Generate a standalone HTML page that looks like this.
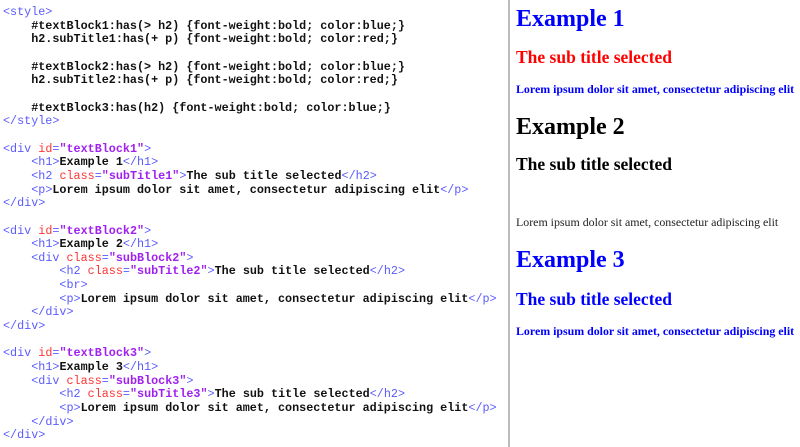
<html><head><style>
body{margin:0;width:800px;height:447px;background:#fff;overflow:hidden;position:relative}
pre{position:absolute;left:3px;top:6px;margin:0;font:bold 11.75px/13.65px "Liberation Mono",monospace;color:#111}
.t{color:#5a5aff;font-weight:normal}.a{color:#f33;font-weight:normal}.v{color:#a020f0}
#d{position:absolute;left:508px;top:0;width:2px;height:447px;background:#bbb}
.r{position:absolute;left:516px;font-family:"Liberation Serif",serif;font-weight:700;white-space:nowrap;margin:0}
.h1{font-size:24px}.h2{font-size:17.5px}.p{font-size:11.9px}
</style></head><body>
<pre><span class="t">&lt;style&gt;</span>
    #textBlock1:has(&gt; h2) {font-weight:bold; color:blue;}
    h2.subTitle1:has(+ p) {font-weight:bold; color:red;}

    #textBlock2:has(&gt; h2) {font-weight:bold; color:blue;}
    h2.subTitle2:has(+ p) {font-weight:bold; color:red;}

    #textBlock3:has(h2) {font-weight:bold; color:blue;}
<span class="t">&lt;/style&gt;</span>

<span class="t">&lt;div </span><span class="a">id</span><span class="t">=</span><span class="v">"textBlock1"</span><span class="t">&gt;</span>
    <span class="t">&lt;h1&gt;</span>Example 1<span class="t">&lt;/h1&gt;</span>
    <span class="t">&lt;h2 </span><span class="a">class</span><span class="t">=</span><span class="v">"subTitle1"</span><span class="t">&gt;</span>The sub title selected<span class="t">&lt;/h2&gt;</span>
    <span class="t">&lt;p&gt;</span>Lorem ipsum dolor sit amet, consectetur adipiscing elit<span class="t">&lt;/p&gt;</span>
<span class="t">&lt;/div&gt;</span>

<span class="t">&lt;div </span><span class="a">id</span><span class="t">=</span><span class="v">"textBlock2"</span><span class="t">&gt;</span>
    <span class="t">&lt;h1&gt;</span>Example 2<span class="t">&lt;/h1&gt;</span>
    <span class="t">&lt;div </span><span class="a">class</span><span class="t">=</span><span class="v">"subBlock2"</span><span class="t">&gt;</span>
        <span class="t">&lt;h2 </span><span class="a">class</span><span class="t">=</span><span class="v">"subTitle2"</span><span class="t">&gt;</span>The sub title selected<span class="t">&lt;/h2&gt;</span>
        <span class="t">&lt;br&gt;</span>
        <span class="t">&lt;p&gt;</span>Lorem ipsum dolor sit amet, consectetur adipiscing elit<span class="t">&lt;/p&gt;</span>
    <span class="t">&lt;/div&gt;</span>
<span class="t">&lt;/div&gt;</span>

<span class="t">&lt;div </span><span class="a">id</span><span class="t">=</span><span class="v">"textBlock3"</span><span class="t">&gt;</span>
    <span class="t">&lt;h1&gt;</span>Example 3<span class="t">&lt;/h1&gt;</span>
    <span class="t">&lt;div </span><span class="a">class</span><span class="t">=</span><span class="v">"subBlock3"</span><span class="t">&gt;</span>
        <span class="t">&lt;h2 </span><span class="a">class</span><span class="t">=</span><span class="v">"subTitle3"</span><span class="t">&gt;</span>The sub title selected<span class="t">&lt;/h2&gt;</span>
        <span class="t">&lt;p&gt;</span>Lorem ipsum dolor sit amet, consectetur adipiscing elit<span class="t">&lt;/p&gt;</span>
    <span class="t">&lt;/div&gt;</span>
<span class="t">&lt;/div&gt;</span></pre>
<div id="d"></div>
<div class="r h1" style="top:6px;color:#00f">Example 1</div>
<div class="r h2" style="top:47px;color:#f00">The sub title selected</div>
<div class="r p" style="top:82px;color:#00f">Lorem ipsum dolor sit amet, consectetur adipiscing elit</div>
<div class="r h1" style="top:114px;color:#000">Example 2</div>
<div class="r h2" style="top:154px;color:#000">The sub title selected</div>
<div class="r p" style="top:215px;color:#222;font-weight:normal">Lorem ipsum dolor sit amet, consectetur adipiscing elit</div>
<div class="r h1" style="top:247px;color:#00f">Example 3</div>
<div class="r h2" style="top:289px;color:#00f">The sub title selected</div>
<div class="r p" style="top:324px;color:#00f">Lorem ipsum dolor sit amet, consectetur adipiscing elit</div>
</body></html>
